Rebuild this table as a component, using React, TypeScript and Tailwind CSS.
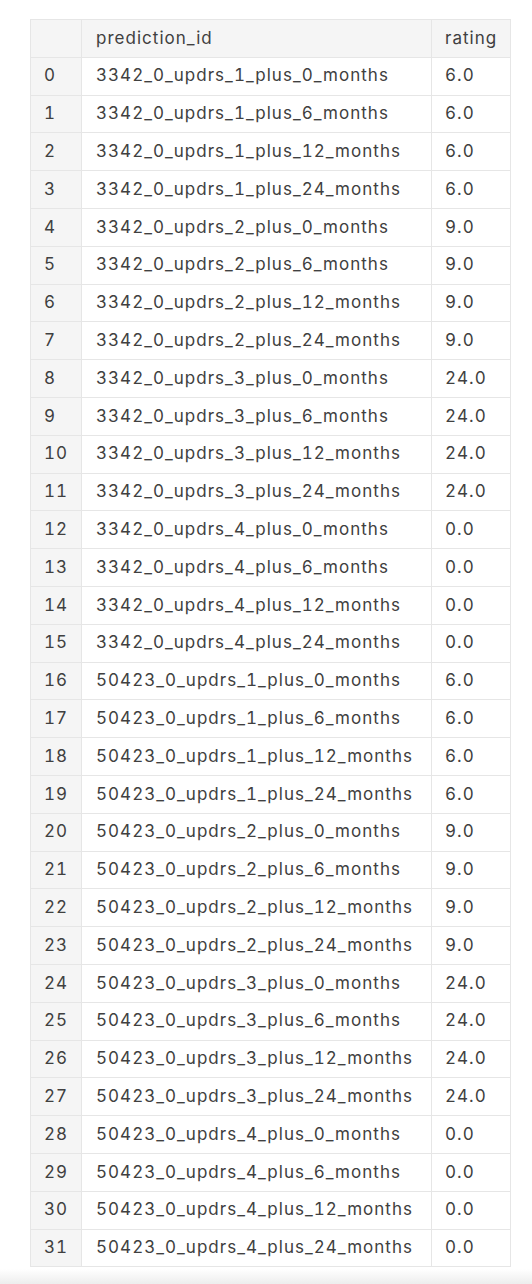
const ROWS: [string, string][] = [];
const RATINGS = ["6.0", "9.0", "24.0", "0.0"];
for (const site of ["3342", "50423"]) {
  [1, 2, 3, 4].forEach((u, i) => {
    [0, 6, 12, 24].forEach((m) => {
      ROWS.push([`${site}_0_updrs_${u}_plus_${m}_months`, RATINGS[i]]);
    });
  });
}

const cell = "flex h-[37.8px] items-center border-r border-b border-[#e6e6e6] px-[14px]";

export default function App() {
  return (
    <div
      className="flex h-[1284px] flex-col bg-white text-[17px] tracking-[0.06em] text-[#404040] tabular-nums"
      style={{ fontFamily: "Inter, 'Noto Sans', sans-serif" }}
    >
      <div className="ml-[30px] mt-[19px] w-[481px] border-t border-l border-[#e6e6e6]">
        <div className="flex bg-[#f5f5f5]">
          <div className={`${cell} w-[51px]`} />
          <div className={`${cell} w-[350px] pl-[14px]`}>prediction_id</div>
          <div className={`${cell} w-[79px] pl-[13px]`}>rating</div>
        </div>
        {ROWS.map(([id, rating], i) => (
          <div key={id} className="flex">
            <div className={`${cell} w-[51px] bg-[#f5f5f5] pl-[13px]`}>{i}</div>
            <div className={`${cell} w-[350px] pl-[14px]`}>{id}</div>
            <div className={`${cell} w-[79px] pl-[13px]`}>{rating}</div>
          </div>
        ))}
      </div>
      <div className="mt-[2px] flex-1 bg-gradient-to-b from-white to-[#ededed]" />
    </div>
  );
}
